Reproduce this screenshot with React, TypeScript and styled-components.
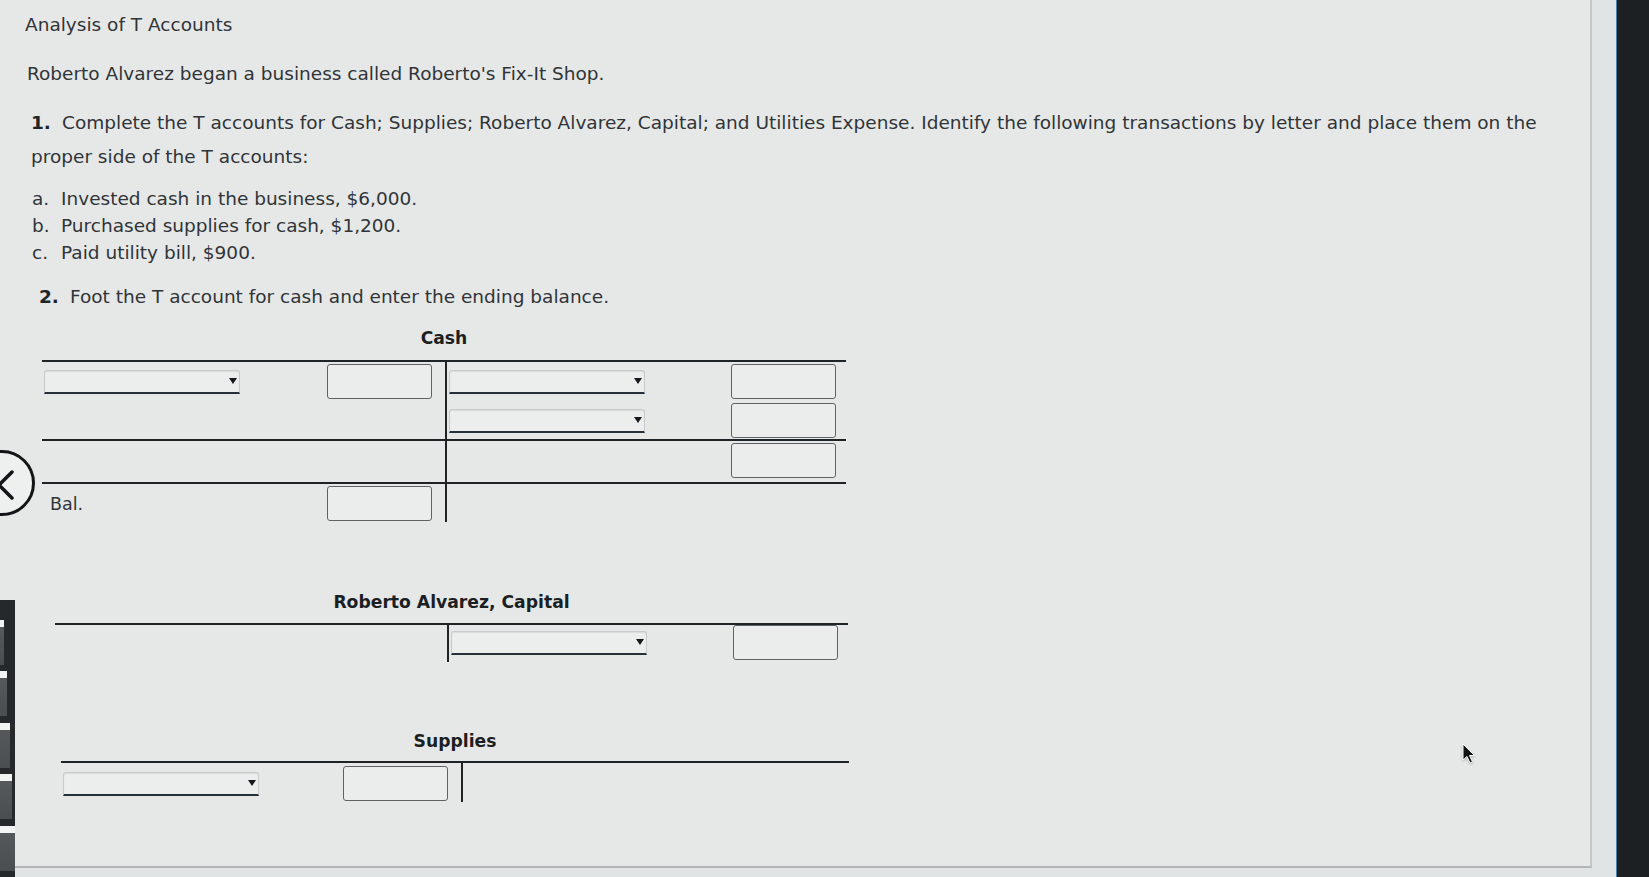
import React from 'react';
import styled, { createGlobalStyle } from 'styled-components';

const GlobalStyle = createGlobalStyle`
  html, body {
    margin: 0;
    padding: 0;
    background: #1c2022;
  }
  body {
    font-family: "DejaVu Sans", Verdana, sans-serif;
    overflow: hidden;
  }
  * {
    box-sizing: border-box;
  }
`;

const Desk = styled.div`
  position: relative;
  display: flex;
  width: 1649px;
  height: 877px;
  background: #1c2022;
  overflow: hidden;
`;

const Screen = styled.div`
  width: 1617px;
  height: 877px;
  background: #e1e4e4;
  border-right: 1px solid #4d7fa4;
`;

const Panel = styled.main`
  position: relative;
  width: 1592px;
  height: 868px;
  padding-top: 13px;
  background: #e6e8e8;
  border-right: 2px solid #c3c7c7;
  border-bottom: 2px solid #b2b6b6;
  color: #303437;
  font-size: 18.5px;
`;

const Title = styled.h1`
  margin: 0 0 0 25px;
  font-size: 18.5px;
  font-weight: normal;
  line-height: 24px;
`;

const Intro = styled.p`
  margin: 25px 0 0 27px;
  line-height: 24px;
`;

const Step = styled.p<{ $top: number; $left: number; $lh: number }>`
  margin: ${p => p.$top}px 0 0 ${p => p.$left}px;
  line-height: ${p => p.$lh}px;
  white-space: nowrap;
`;

const StepNo = styled.span<{ $w: number; $bold?: boolean }>`
  display: inline-block;
  width: ${p => p.$w}px;
  font-weight: ${p => (p.$bold ? 'bold' : 'normal')};
  color: ${p => (p.$bold ? '#202427' : 'inherit')};
`;

const Letters = styled.ol`
  margin: 11px 0 0 32px;
  padding: 0;
  list-style: none;
  line-height: 27px;
`;

const Letter = styled.li`
  white-space: nowrap;
`;

/* ---------- T accounts ---------- */

const Account = styled.section<{ $top: number; $left: number; $width: number }>`
  margin: ${p => p.$top}px 0 0 ${p => p.$left}px;
  width: ${p => p.$width}px;
`;

const AccountName = styled.h2`
  margin: 0;
  font-size: 17.2px;
  font-weight: bold;
  line-height: 20px;
  text-align: center;
  color: #1b1f22;
`;

const AccountBody = styled.div<{ $gap: number }>`
  margin-top: ${p => p.$gap}px;
  border-top: 2px solid #1e2326;
`;

const Section = styled.div<{ $split: number; $ruled?: boolean }>`
  display: grid;
  grid-template-columns: ${p => p.$split}px 1fr;
  border-bottom: ${p => (p.$ruled ? '2px solid #1e2326' : 'none')};
`;

const Side = styled.div<{ $right?: boolean; $pt: number; $pb: number }>`
  display: flex;
  flex-direction: column;
  gap: 4px;
  padding: ${p => p.$pt}px ${p => (p.$right ? 10 : 13)}px ${p => p.$pb}px 2px;
  border-left: ${p => (p.$right ? '2px solid #1e2326' : 'none')};
`;

const Entry = styled.div`
  display: flex;
  align-items: center;
  justify-content: space-between;
  height: 35px;
`;

const BalLabel = styled.span`
  padding-left: 6px;
  font-size: 17.5px;
  color: #303437;
`;

const DropWrap = styled.div`
  position: relative;
  width: 196px;
  height: 24px;

  &::after {
    content: '';
    position: absolute;
    right: 3px;
    top: 8px;
    border-left: 4px solid transparent;
    border-right: 4px solid transparent;
    border-top: 6px solid #15191c;
    pointer-events: none;
  }
`;

const Drop = styled.select`
  appearance: none;
  display: block;
  width: 100%;
  height: 100%;
  margin: 0;
  background: #eceeee;
  border: 1px solid #c8cbcb;
  border-bottom: 2px solid #26303a;
  border-radius: 3px 3px 0 0;
  box-shadow: inset 0 1px 1px rgba(0, 0, 0, 0.08);
  font: inherit;
`;

const Amount = styled.input`
  width: 105px;
  height: 35px;
  margin: 0;
  background: #ebeded;
  border: 1.5px solid #5e6265;
  border-radius: 3px;
  font: inherit;
`;

type Row = { label?: string; drop?: boolean; amount?: boolean };
type Part = { left: Row[]; right: Row[]; ruled?: boolean; pt: number; pb: number };

const Dropdown = () => (
  <DropWrap>
    <Drop defaultValue="">
      <option value=""></option>
    </Drop>
  </DropWrap>
);

const EntryRow = ({ row }: { row: Row }) => (
  <Entry>
    {row.label ? <BalLabel>{row.label}</BalLabel> : row.drop ? <Dropdown /> : <span />}
    {row.amount && <Amount type="text" />}
  </Entry>
);

const TAccount = (props: {
  name: string;
  top: number;
  left: number;
  width: number;
  split: number;
  gap: number;
  parts: Part[];
}) => (
  <Account $top={props.top} $left={props.left} $width={props.width}>
    <AccountName>{props.name}</AccountName>
    <AccountBody $gap={props.gap}>
      {props.parts.map((part, i) => (
        <Section key={i} $split={props.split} $ruled={part.ruled}>
          <Side $pt={part.pt} $pb={part.pb}>
            {part.left.map((r, j) => (
              <EntryRow key={j} row={r} />
            ))}
          </Side>
          <Side $right $pt={part.pt} $pb={part.pb}>
            {part.right.map((r, j) => (
              <EntryRow key={j} row={r} />
            ))}
          </Side>
        </Section>
      ))}
    </AccountBody>
  </Account>
);

const both: Row = { drop: true, amount: true };

const cashParts: Part[] = [
  { left: [both], right: [both, both], ruled: true, pt: 2, pb: 1 },
  { left: [], right: [{ amount: true }], ruled: true, pt: 2, pb: 4 },
  { left: [{ label: 'Bal.', amount: true }], right: [], pt: 2, pb: 1 },
];

const capitalParts: Part[] = [{ left: [], right: [both], pt: 0, pb: 2 }];
const suppliesParts: Part[] = [{ left: [both], right: [], pt: 3, pb: 1 }];

/* ---------- photo edge bits ---------- */

const BackButton = styled.button`
  position: absolute;
  left: -31px;
  top: 450px;
  width: 66px;
  height: 66px;
  padding: 0;
  border: 3px solid #121416;
  border-radius: 50%;
  background: #eef0f0;
  z-index: 2;

  svg {
    position: absolute;
    left: 24px;
    top: 16px;
  }
`;

const SideStrip = styled.div`
  position: absolute;
  left: 0;
  top: 600px;
  bottom: 0;
  width: 15px;
  padding-top: 20px;
  display: flex;
  flex-direction: column;
  background: #25292b;
  z-index: 2;
`;

const StripTab = styled.div<{ $w: number }>`
  width: ${p => p.$w}px;
  height: 59px;
  border-top: 7px solid #f2f4f4;
  background: linear-gradient(#55595b 0, #4a4e50 38px, #25292b 38px);
`;

const Pointer = styled.svg`
  position: absolute;
  left: 1462px;
  top: 743px;
  filter: drop-shadow(0 1px 1px rgba(0, 0, 0, 0.25));
`;

export default function App() {
  return (
    <>
      <GlobalStyle />
      <Desk>
        <Screen>
          <Panel>
            <Title>Analysis of T Accounts</Title>
            <Intro>Roberto Alvarez began a business called Roberto's Fix-It Shop.</Intro>

            <Step $top={20} $left={31} $lh={34}>
              <StepNo $w={31} $bold>1.</StepNo>
              Complete the T accounts for Cash; Supplies; Roberto Alvarez, Capital; and Utilities
              Expense. Identify the following transactions by letter and place them on the
              <br />
              proper side of the T accounts:
            </Step>

            <Letters>
              <Letter>
                <StepNo $w={29}>a.</StepNo>Invested cash in the business, $6,000.
              </Letter>
              <Letter>
                <StepNo $w={29}>b.</StepNo>Purchased supplies for cash, $1,200.
              </Letter>
              <Letter>
                <StepNo $w={29}>c.</StepNo>Paid utility bill, $900.
              </Letter>
            </Letters>

            <Step $top={17} $left={39} $lh={27}>
              <StepNo $w={31} $bold>2.</StepNo>
              Foot the T account for cash and enter the ending balance.
            </Step>

            <TAccount name="Cash" top={18} left={42} width={804} split={403} gap={12} parts={cashParts} />
            <TAccount
              name="Roberto Alvarez, Capital"
              top={70}
              left={55}
              width={793}
              split={392}
              gap={11}
              parts={capitalParts}
            />
            <TAccount
              name="Supplies"
              top={69}
              left={61}
              width={788}
              split={400}
              gap={10}
              parts={suppliesParts}
            />

            <Pointer width="14" height="21" viewBox="0 0 14 21">
              <path d="M1 1 L1 17 L5 13.5 L8 20 L10.5 19 L7.5 12.5 L12.5 12.5 Z" fill="#111" stroke="#fff" strokeWidth="1" />
            </Pointer>
          </Panel>
        </Screen>

        <BackButton aria-label="Previous">
          <svg width="20" height="32" viewBox="0 0 20 32">
            <path d="M16 3 L3 16 L16 29" fill="none" stroke="#121416" strokeWidth="3.5" strokeLinecap="round" />
          </svg>
        </BackButton>

        <SideStrip>
          <StripTab $w={4} />
          <StripTab $w={7} />
          <StripTab $w={10} />
          <StripTab $w={12} />
          <StripTab $w={15} />
        </SideStrip>
      </Desk>
    </>
  );
}
